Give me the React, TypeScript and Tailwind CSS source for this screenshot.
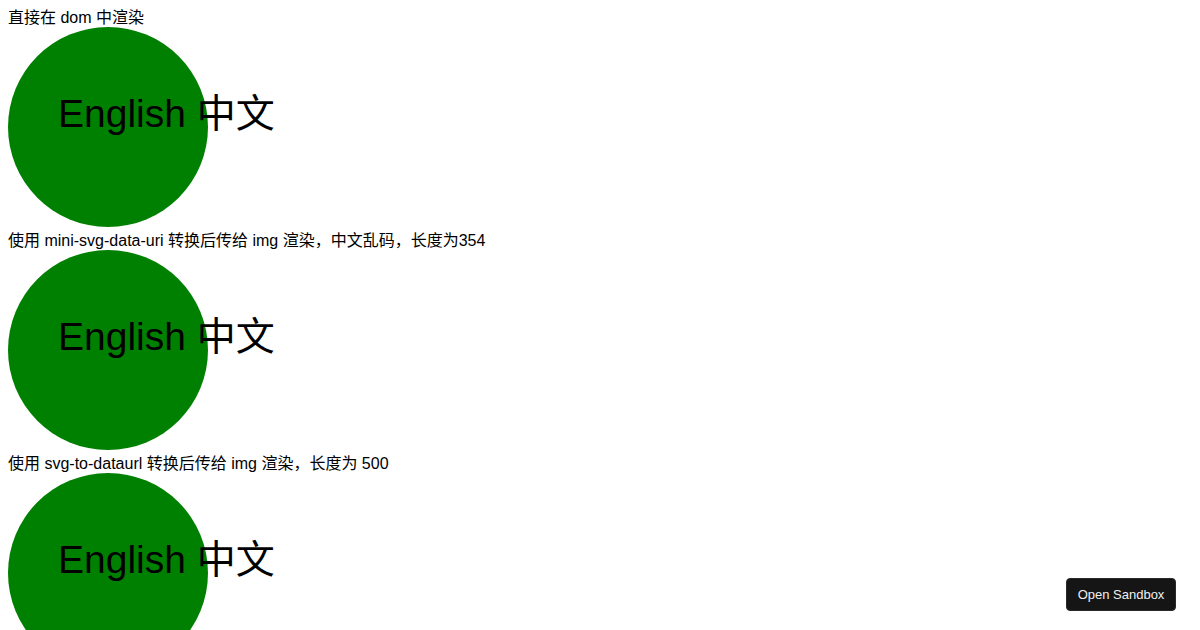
import React from "react";

function Circle() {
  return (
    <svg width="200" height="200" viewBox="0 0 200 200" className="mb-1 block overflow-visible">
      <circle cx="100" cy="100" r="100" fill="#008000" />
      <text x="50" y="100" fontSize="39" fill="#000" fontFamily="'Liberation Sans', 'Noto Sans CJK SC', sans-serif">
        English 中文
      </text>
    </svg>
  );
}

function Block({ label }: { label: string }) {
  return (
    <div className="flex flex-col">
      <div className="h-[19px] leading-[19px]">{label}</div>
      <Circle />
    </div>
  );
}

export default function App() {
  return (
    <div className="relative h-[630px] overflow-hidden bg-white p-2 font-['Liberation_Sans','Noto_Sans_CJK_SC',sans-serif] text-[16px] text-black">
      <Block label="直接在 dom 中渲染" />
      <Block label="使用 mini-svg-data-uri 转换后传给 img 渲染，中文乱码，长度为354" />
      <Block label="使用 svg-to-dataurl 转换后传给 img 渲染，长度为 500" />
      <button className="fixed bottom-[19px] right-[24px] flex h-[33px] w-[110px] items-center justify-center rounded-[4px] border border-[#2a2a2a] bg-[#151515] font-['Liberation_Sans',sans-serif] text-[13px] text-[#f0f0f0]">
        Open Sandbox
      </button>
    </div>
  );
}
